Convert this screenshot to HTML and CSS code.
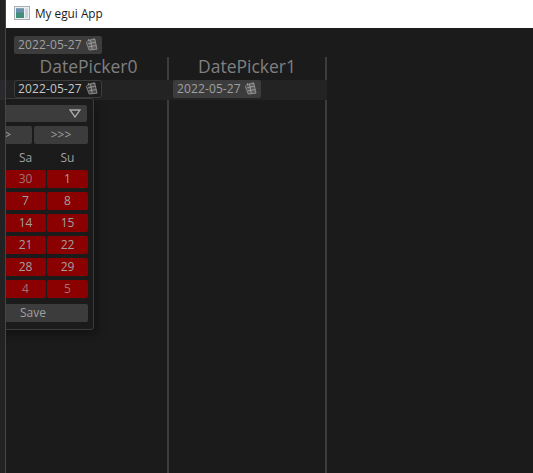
FILE: index.html
```html
<!DOCTYPE html>
<html>
<head>
<meta charset="utf-8">
<title>My egui App</title>
<link rel="stylesheet" href="styles.css">
</head>
<body>
  <svg class="defs" width="0" height="0">
    <symbol id="cal" viewBox="0 0 14 14">
      <path d="M3 2.5 L10.5 1 L13 12 L4.5 13 Z" fill="currentColor" opacity="0.3"/>
      <path d="M1.5 5 L3.5 2.5 L10.5 1 L13 12 L4.5 13 Z M2.5 6.5 L11 4.5 M3.6 9.6 L12 8.2 M6 2.2 L7.8 12.6 M3.5 1 L4 3 M9.5 0.5 L10 2" fill="none" stroke="currentColor" stroke-width="0.7"/>
    </symbol>
  </svg>

  <div class="strip"></div>

  <div class="window">
    <div class="titlebar">
      <svg class="appicon" width="16" height="14" viewBox="0 0 16 14">
        <rect x="0.5" y="0.5" width="15" height="13" fill="#eef1f3" stroke="#a8b0b6"/>
        <rect x="2" y="2.5" width="8" height="9.5" fill="#3f8f7c"/>
        <rect x="2" y="2.5" width="8" height="4" fill="#6b8fb0"/>
        <rect x="11" y="2.5" width="3" height="9.5" fill="#ccd4da"/>
      </svg>
      <span class="apptitle">My egui App</span>
    </div>

    <div class="content">
      <div class="toprow">
        <div class="datebtn">2022-05-27 <svg class="calicon"><use href="#cal"/></svg></div>
      </div>

      <div class="table">
        <div class="column col0">
          <div class="colhead">DatePicker0</div>
          <div class="cell">
            <div class="datebtn open">2022-05-27 <svg class="calicon"><use href="#cal"/></svg></div>
          </div>
        </div>
        <div class="column col1">
          <div class="colhead">DatePicker1</div>
          <div class="cell">
            <div class="datebtn">2022-05-27 <svg class="calicon"><use href="#cal"/></svg></div>
          </div>
        </div>
      </div>

      <div class="popup">
        <div class="combo">
          <svg class="arrow" width="12" height="9" viewBox="0 0 12 9"><path d="M1 1 H11 L6 8 Z" fill="none" stroke="#a8a8a8" stroke-width="1.3"/></svg>
        </div>
        <div class="navrow">
          <div class="btn prev">&gt;</div>
          <div class="btn">&gt;&gt;&gt;</div>
        </div>
        <div class="days">
          <div class="dayhead">Sa</div><div class="dayhead">Su</div>
          <div class="day dim">30</div><div class="day">1</div>
          <div class="day">7</div><div class="day">8</div>
          <div class="day">14</div><div class="day">15</div>
          <div class="day">21</div><div class="day">22</div>
          <div class="day">28</div><div class="day">29</div>
          <div class="day dim">4</div><div class="day dim">5</div>
        </div>
        <div class="savewrap">
          <div class="btn save">Save</div>
        </div>
      </div>
    </div>
  </div>
</body>
</html>
```

FILE: styles.css
```css
html, body {
  margin: 0;
  height: 100%;
}

body {
  display: flex;
  width: 533px;
  height: 473px;
  overflow: hidden;
  background: #1b1b1b;
  font-family: "Open Sans", "Noto Sans", sans-serif;
  font-size: 12px;
  color: #a0a0a0;
}

.defs {
  position: absolute;
}

.strip {
  width: 5px;
  background: linear-gradient(#222222 0, #222222 80px, #2a2a2e 80px, #2a2a2e 100px, #222222 100px);
  border-right: 1px solid #454545;
  flex: none;
}

.window {
  flex: 1;
  display: flex;
  flex-direction: column;
  min-width: 0;
}

.titlebar {
  height: 28px;
  flex: none;
  background: #ffffff;
  display: flex;
  align-items: center;
  gap: 5px;
  padding-left: 8px;
  padding-bottom: 3px;
  box-sizing: border-box;
}

.apptitle {
  font-family: "Open Sans", sans-serif;
  font-size: 11.8px;
  color: #1a1a1a;
}

.content {
  position: relative;
  flex: 1;
  background: #1b1b1b;
  overflow: hidden;
}

.toprow {
  padding: 8px 0 0 8px;
  height: 21px;
}

.datebtn {
  width: 88px;
  height: 18px;
  box-sizing: border-box;
  padding: 0 0 1px 4px;
  display: flex;
  align-items: center;
  gap: 3px;
  background: #3c3c3c;
  border-radius: 2px;
  white-space: nowrap;
  letter-spacing: 0.01em;
}

.datebtn.open {
  background: #1e1e1e;
  border: 1px solid #3c3c3c;
  border-radius: 3px;
  color: #c8c8c8;
  padding-left: 3px;
}

.calicon {
  width: 13px;
  height: 13px;
  flex: none;
  color: #b0b0b0;
}

.table {
  display: flex;
  height: 416px;
}

.column {
  box-sizing: border-box;
  width: 158px;
  border-right: 2px solid #3c3c3c;
}

.col0 {
  width: 163px;
}

.col0 .colhead {
  padding-left: 4px;
}

.colhead {
  height: 23px;
  text-align: center;
  font-size: 17.5px;
  line-height: 19px;
  color: #808080;
}

.cell {
  height: 20px;
  padding-left: 8px;
  background: #232323;
  margin-right: -2px;
}

.col1 .cell {
  padding-left: 4px;
}

.popup {
  position: absolute;
  top: 70px;
  left: -100px;
  width: 188px;
  height: 232px;
  box-sizing: border-box;
  background: #1b1b1b;
  border: 1px solid #3c3c3c;
  border-radius: 3px;
  box-shadow: 3px 4px 8px rgba(0, 0, 0, 0.35);
  padding: 6px 5px 0 6px;
}

.combo {
  height: 17px;
  margin-right: 1px;
  background: #3c3c3c;
  border-radius: 2px;
  display: flex;
  justify-content: flex-end;
  align-items: center;
  padding-right: 6px;
}

.navrow {
  display: grid;
  grid-template-columns: 1fr 54px;
  gap: 2px;
  margin-top: 4px;
}

.btn {
  height: 18px;
  background: #3c3c3c;
  border-radius: 2px;
  text-align: center;
  line-height: 17px;
}

.prev {
  text-align: right;
  padding-right: 21px;
}

.days {
  display: grid;
  grid-template-columns: repeat(2, 41px);
  justify-content: end;
  column-gap: 1px;
  row-gap: 4px;
  margin-top: 4px;
}

.dayhead {
  height: 22px;
  line-height: 19px;
  text-align: center;
  margin-bottom: -4px;
}

.day {
  height: 18px;
  line-height: 17px;
  text-align: center;
  background: #8b0000;
  border-radius: 2px;
}

.day.dim {
  color: #a07474;
}

.savewrap {
  display: flex;
  justify-content: flex-end;
  margin-top: 6px;
}

.save {
  width: 110px;
}
```
